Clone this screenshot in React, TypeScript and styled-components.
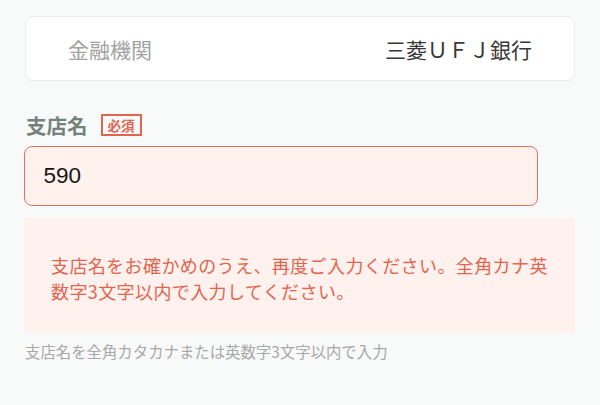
import React from "react";
import styled, { createGlobalStyle } from "styled-components";

const Global = createGlobalStyle`
  html, body { margin: 0; padding: 0; background: #f8f9f9; }
  body { font-family: "Liberation Sans", "Noto Sans CJK JP", sans-serif; }
`;

const Page = styled.div`
  width: 600px;
  height: 405px;
  box-sizing: border-box;
  padding: 16px 25px 0 24px;
  display: flex;
  flex-direction: column;
  background: #f8f9f9;
`;

const InfoCard = styled.div`
  height: 65px;
  box-sizing: border-box;
  width: 550px;
  margin-left: 1px;
  background: #ffffff;
  border: 1px solid #ebeced;
  border-radius: 8px;
  padding: 0 42px 0 42px;
  display: flex;
  align-items: center;
  justify-content: space-between;
`;

const InfoLabel = styled.span`
  font-family: "Noto Sans CJK JP", sans-serif;
  font-size: 21px;
  line-height: 26px;
  color: #a2a2a2;
  font-weight: 400;
`;

const InfoValue = styled.span`
  font-family: "Noto Sans CJK JP", sans-serif;
  font-size: 21px;
  line-height: 26px;
  color: #383838;
  font-weight: 400;
`;

const LabelRow = styled.div`
  margin-top: 33px;
  height: 22px;
  display: flex;
  align-items: center;
  gap: 13px;
  padding-left: 2px;
`;

const FieldLabel = styled.span`
  font-family: "Noto Sans CJK JP", sans-serif;
  font-size: 20.5px;
  line-height: 22px;
  font-weight: 700;
  color: #74827b;
`;

const Badge = styled.span`
  box-sizing: border-box;
  height: 22px;
  width: 41px;
  border: 2px solid #e0644f;
  color: #e0644f;
  font-family: "Noto Sans CJK JP", sans-serif;
  font-size: 13.5px;
  font-weight: 700;
  line-height: 18px;
  display: flex;
  align-items: center;
  justify-content: center;
`;

const Input = styled.div`
  margin-top: 10px;
  width: 514px;
  height: 60px;
  box-sizing: border-box;
  border: 1.5px solid #de7262;
  border-radius: 8px;
  background: #fef1ee;
  padding-left: 18.5px;
  display: flex;
  align-items: center;
  font-size: 22.5px;
  color: #151515;
`;

const ErrorBox = styled.div`
  margin-top: 12px;
  width: 551px;
  height: 115px;
  box-sizing: border-box;
  background: #fef1ee;
  padding: 34px 18px 0 27px;
  color: #e2654f;
  font-family: "Noto Sans CJK JP", sans-serif;
  font-size: 18px;
  letter-spacing: 0.4px;
  line-height: 26px;
`;

const Helper = styled.div`
  margin-top: 8px;
  padding-left: 1px;
  font-family: "Noto Sans CJK JP", sans-serif;
  font-size: 15.4px;
  line-height: 20px;
  color: #a8a8a8;
`;

export default function App() {
  return (
    <>
      <Global />
      <Page>
        <InfoCard>
          <InfoLabel>金融機関</InfoLabel>
          <InfoValue>三菱ＵＦＪ銀行</InfoValue>
        </InfoCard>
        <LabelRow>
          <FieldLabel>支店名</FieldLabel>
          <Badge>必須</Badge>
        </LabelRow>
        <Input>590</Input>
        <ErrorBox>
          支店名をお確かめのうえ、再度ご入力ください。全角カナ英数字3文字以内で入力してください。
        </ErrorBox>
        <Helper>支店名を全角カタカナまたは英数字3文字以内で入力</Helper>
      </Page>
    </>
  );
}
